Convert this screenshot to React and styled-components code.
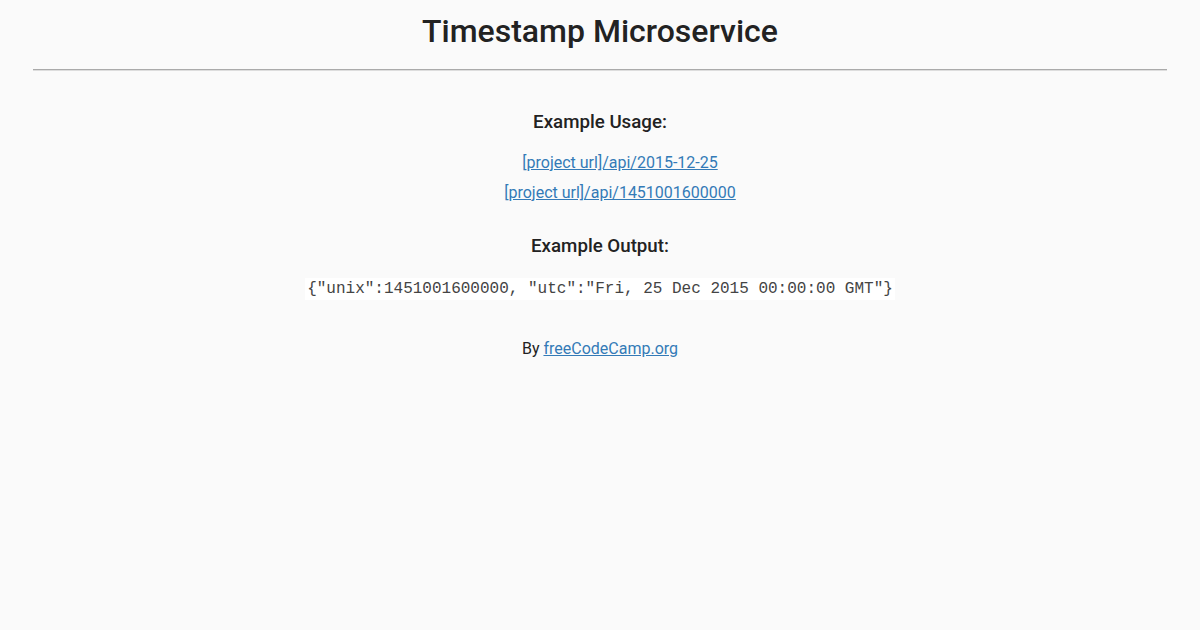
import styled, { createGlobalStyle } from 'styled-components'

const GlobalStyle = createGlobalStyle`
    body {
        margin: 0;
        background: #fafafa;
        font-family: Roboto, "Liberation Sans", sans-serif;
        color: #222;
    }
`

const Page = styled.div`
    padding: 0 33px;
    text-align: center;
`

const Title = styled.h1`
    margin: 0;
    padding-top: 12px;
    font-size: 32px;
    font-weight: 500;
    line-height: 38px;
`

const Rule = styled.hr`
    margin: 19px 0 0 0;
    border: none;
    border-top: 1px solid #aaa;
    border-bottom: 1px solid #ddd;
`

const Section = styled.div`
    display: flex;
    flex-direction: column;
    align-items: center;
    margin-top: ${(p) => p.$top}px;
`

const Heading = styled.h3`
    margin: 0 0 ${(p) => p.$gap}px 0;
    font-size: 18.72px;
    font-weight: 500;
    line-height: 24px;
`

const List = styled.ul`
    margin: 0;
    padding-left: 40px;
    list-style: none;
    display: flex;
    flex-direction: column;
    align-items: center;
`

const Link = styled.a`
    color: #337ab7;
    font-size: 16px;
    line-height: 30px;
    text-decoration: underline;
`

const Code = styled.code`
    font-family: "Liberation Mono", "Courier New", monospace;
    font-size: 16px;
    background: #fff;
    padding: 2px 2px;
    color: #444;
`

const Footer = styled.p`
    margin: 0;
    font-size: 16px;
    line-height: 20px;
`

function App() {
    return (
        <Page>
            <GlobalStyle />
            <Title>Timestamp Microservice</Title>
            <Rule />
            <Section $top={39}>
                <Heading $gap={14}>Example Usage:</Heading>
                <List>
                    <li><Link href="#">[project url]/api/2015-12-25</Link></li>
                    <li><Link href="#">[project url]/api/1451001600000</Link></li>
                </List>
            </Section>
            <Section $top={26}>
                <Heading $gap={20}>Example Output:</Heading>
                <Code>{'{"unix":1451001600000, "utc":"Fri, 25 Dec 2015 00:00:00 GMT"}'}</Code>
            </Section>
            <Section $top={34}>
                <Footer>By <Link href="#">freeCodeCamp.org</Link></Footer>
            </Section>
        </Page>
    )
}

export default App
